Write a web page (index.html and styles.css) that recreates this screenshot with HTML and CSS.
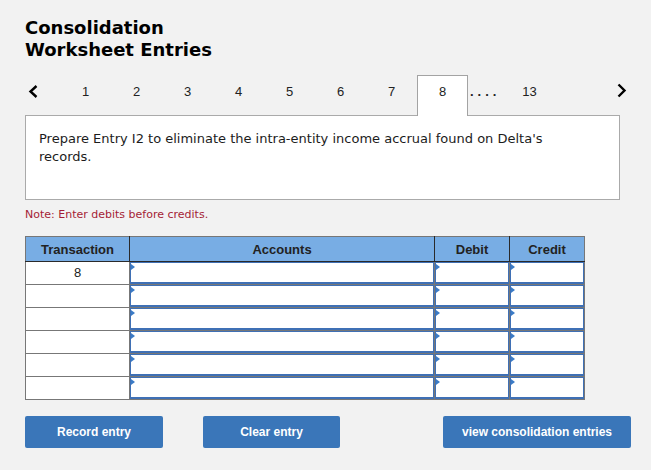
FILE: index.html
```html
<!DOCTYPE html>
<html>
<head>
<meta charset="utf-8">
<link rel="stylesheet" href="styles.css">
</head>
<body>
<div class="page">
  <h1 class="title">Consolidation<br>Worksheet Entries</h1>

  <nav class="tabs">
    <span class="arrow prev"><svg width="10" height="13" viewBox="0 0 10 13"><polyline points="8.5,1 2.5,6.5 8.5,12" fill="none" stroke="#000" stroke-width="2.4"/></svg></span>
    <span class="tab">1</span>
    <span class="tab">2</span>
    <span class="tab">3</span>
    <span class="tab">4</span>
    <span class="tab">5</span>
    <span class="tab">6</span>
    <span class="tab">7</span>
    <span class="tab active">8</span>
    <span class="dots">....</span>
    <span class="tab">13</span>
    <span class="arrow next"><svg width="10" height="15" viewBox="0 0 10 15"><polyline points="1.5,1.5 7.5,7.5 1.5,13.5" fill="none" stroke="#000" stroke-width="2.4"/></svg></span>
  </nav>

  <div class="prompt">Prepare Entry I2 to eliminate the intra-entity income accrual found on Delta's records.</div>

  <p class="note">Note: Enter debits before credits.</p>

  <table class="sheet">
    <colgroup>
      <col class="c-trans"><col class="c-acct"><col class="c-num"><col class="c-num">
    </colgroup>
    <thead>
      <tr><th>Transaction</th><th>Accounts</th><th>Debit</th><th>Credit</th></tr>
    </thead>
    <tbody>
      <tr><td class="trans">8</td><td><div class="field"></div></td><td><div class="field"></div></td><td><div class="field"></div></td></tr>
      <tr><td class="trans"></td><td><div class="field"></div></td><td><div class="field"></div></td><td><div class="field"></div></td></tr>
      <tr><td class="trans"></td><td><div class="field"></div></td><td><div class="field"></div></td><td><div class="field"></div></td></tr>
      <tr><td class="trans"></td><td><div class="field"></div></td><td><div class="field"></div></td><td><div class="field"></div></td></tr>
      <tr><td class="trans"></td><td><div class="field"></div></td><td><div class="field"></div></td><td><div class="field"></div></td></tr>
      <tr><td class="trans"></td><td><div class="field"></div></td><td><div class="field"></div></td><td><div class="field"></div></td></tr>
    </tbody>
  </table>

  <div class="actions">
    <button class="btn btn-record">Record entry</button>
    <button class="btn btn-clear">Clear entry</button>
    <button class="btn btn-view">view consolidation entries</button>
  </div>
</div>
</body>
</html>
```

FILE: styles.css
```css
html, body {
  margin: 0;
  padding: 0;
  background: #f2f2f2;
}

.page {
  padding: 17px 0 0 25px;
  width: 606px;
}

.title {
  margin: 0;
  font-family: "DejaVu Sans", sans-serif;
  font-weight: bold;
  font-size: 18px;
  line-height: 22px;
  color: #000;
}

.tabs {
  display: flex;
  align-items: flex-start;
  height: 40px;
  margin-top: 14px;
  font-family: "Liberation Sans", Arial, sans-serif;
  font-size: 13px;
  line-height: 16px;
  color: #222;
}

.arrow {
  display: block;
  padding-top: 9px;
}

.arrow svg {
  display: block;
}

.arrow.prev {
  width: 35px;
  padding-left: 3px;
  box-sizing: border-box;
  padding-top: 10px;
}

.arrow.next {
  margin-left: auto;
  margin-right: 4px;
  padding-top: 8px;
}

.tab {
  width: 51px;
  height: 40px;
  box-sizing: border-box;
  text-align: center;
  padding-top: 9px;
}

.tab.active {
  position: relative;
  z-index: 1;
  height: 41px;
  margin-bottom: -1px;
  padding-top: 8px;
  background: #fff;
  border: 1px solid #a3a3a3;
  border-bottom: none;
}

.dots {
  width: 36px;
  box-sizing: border-box;
  padding-top: 9px;
  padding-left: 2px;
  font-weight: bold;
  letter-spacing: 4px;
}

.prompt {
  width: 595px;
  height: 85px;
  box-sizing: border-box;
  background: #fff;
  border: 1px solid #aaaaaa;
  padding: 14px 45px 14px 13px;
  font-family: "DejaVu Sans", sans-serif;
  font-size: 13px;
  line-height: 18px;
  color: #1c1c1c;
}

.note {
  margin: 8px 0 0;
  font-family: "DejaVu Sans", sans-serif;
  font-size: 11px;
  line-height: 14px;
  color: #a51d36;
}

.sheet {
  margin-top: 14px;
  width: 560px;
  table-layout: fixed;
  border-collapse: collapse;
  font-family: "Liberation Sans", Arial, sans-serif;
  font-size: 13px;
  color: #222;
}

.c-trans { width: 104px; }
.c-acct { width: 305px; }
.c-num { width: 75px; }

.sheet th {
  height: 24px;
  padding: 0;
  background: #78ade4;
  font-weight: bold;
  text-align: center;
  vertical-align: middle;
  border: 1px solid #2a2a2a;
  border-top-color: #777;
}

.sheet th:first-child { border-left-color: #777; }
.sheet th:last-child { border-right-color: #777; }

.sheet td {
  height: 22px;
  padding: 0;
  border: 1px solid #777;
  background: #fff;
  vertical-align: top;
}

.sheet td.trans {
  text-align: center;
  vertical-align: middle;
  line-height: 16px;
}

.field {
  position: relative;
  height: 22px;
  box-sizing: border-box;
  background: #fff;
  border: 1px solid #3f70b5;
  border-bottom-width: 2px;
}

.field::before {
  content: "";
  position: absolute;
  top: 1px;
  left: 0;
  width: 0;
  height: 0;
  border-left: 4px solid #3b7bc6;
  border-top: 3px solid transparent;
  border-bottom: 3px solid transparent;
}

.actions {
  display: flex;
  margin-top: 16px;
}

.btn {
  height: 32px;
  border: none;
  border-radius: 2px;
  background: #3a76b9;
  color: #fff;
  font-family: "Liberation Sans", Arial, sans-serif;
  font-weight: bold;
  font-size: 12px;
  padding: 0;
  margin: 0;
}

.btn-record { width: 138px; }
.btn-clear { width: 137px; margin-left: 40px; }
.btn-view { width: 188px; margin-left: auto; }
```
